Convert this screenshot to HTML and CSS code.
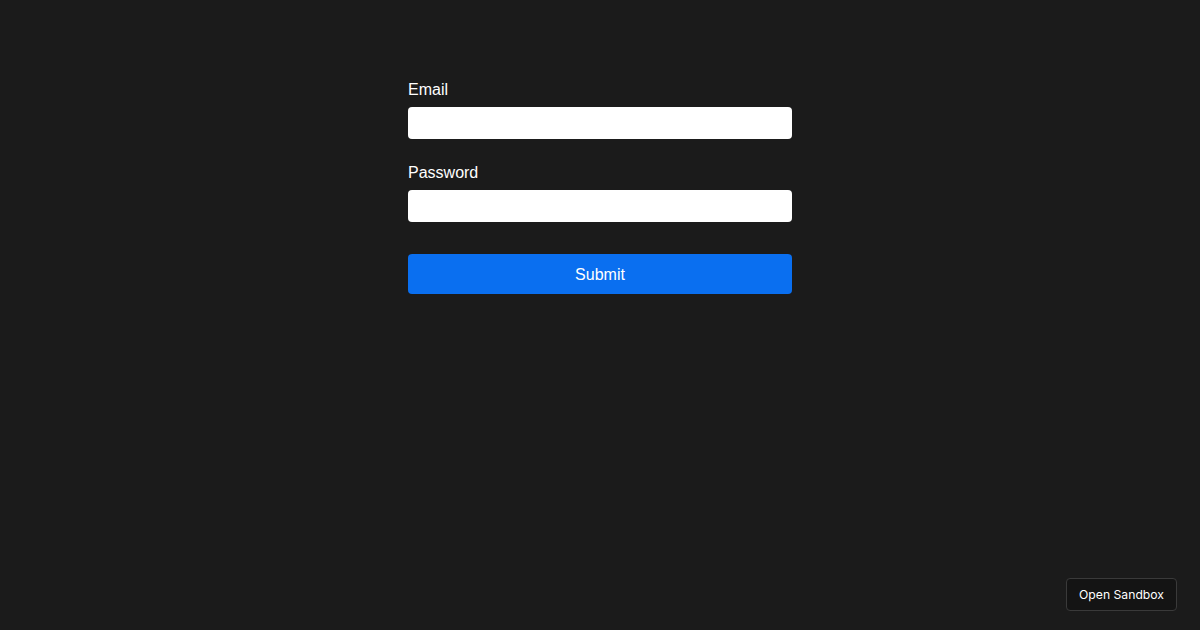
FILE: index.html
```html
<!DOCTYPE html>
<html>
<head>
<meta charset="utf-8">
<link rel="stylesheet" href="styles.css">
</head>
<body>
<form class="form">
  <div class="field">
    <label class="label">Email</label>
    <input class="input" type="email">
  </div>
  <div class="field">
    <label class="label">Password</label>
    <input class="input" type="password">
  </div>
  <button class="submit" type="button">Submit</button>
</form>
<a class="sandbox">Open Sandbox</a>
</body>
</html>
```
FILE: styles.css
```css
html, body {
  margin: 0;
  height: 100%;
  background: #1b1b1b;
  font-family: "Liberation Sans", Arial, sans-serif;
}
.form {
  width: 384px;
  margin: 0 auto;
  padding-top: 80px;
  display: flex;
  flex-direction: column;
}
.field {
  display: flex;
  flex-direction: column;
  margin-bottom: 24px;
}
.label {
  color: #ffffff;
  font-size: 16px;
  line-height: 20px;
  margin-bottom: 7px;
}
.input {
  height: 32px;
  box-sizing: border-box;
  border: none;
  border-radius: 4px;
  background: #ffffff;
  margin: 0;
}
.submit {
  margin-top: 8px;
  height: 40px;
  padding-top: 2px;
  border: none;
  border-radius: 4px;
  background: #0a6ff0;
  color: #ffffff;
  font-family: "Liberation Sans", Arial, sans-serif;
  font-size: 16px;
}
.sandbox {
  position: fixed;
  right: 23px;
  bottom: 19px;
  height: 33px;
  box-sizing: border-box;
  padding: 0 12px;
  display: flex;
  align-items: center;
  background: #141414;
  border: 1px solid #3a3a3a;
  border-radius: 4px;
  color: #ffffff;
  font-family: Inter, sans-serif;
  font-size: 12.2px;
}
```
